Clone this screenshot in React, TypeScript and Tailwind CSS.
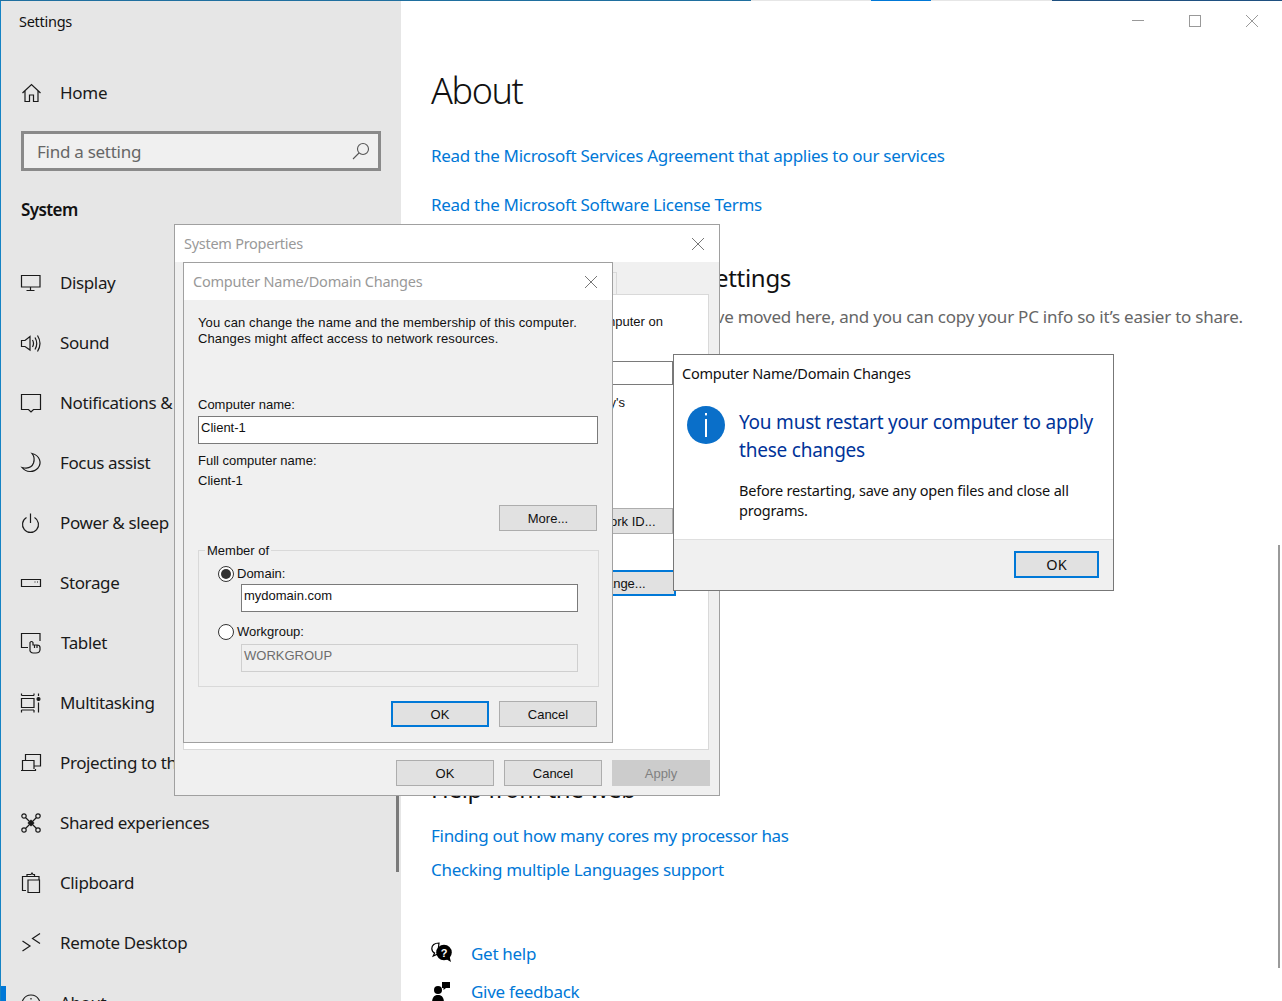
import React from "react";

const S = { fill: "none", stroke: "#1a1a1a", strokeWidth: 1.2 };

function Ico({ children }: { children: React.ReactNode }) {
  return (
    <svg width="22" height="22" viewBox="0 0 22 22" className="shrink-0" {...S}>
      {children}
    </svg>
  );
}

const icons: Record<string, React.ReactNode> = {
  home: <path d="M1.5 11 L10.5 2.5 L19.5 11 M4 9 V19.5 H8.5 V13 H12.5 V19.5 H17 V9" />,
  display: <path d="M1.5 3.5 H20 V15 H1.5 Z M10.5 15 V18.5 M6.5 18.5 H14.5" />,
  sound: (
    <path d="M1.5 8.5 H5 L10 4.5 V18 L5 14.5 H1.5 Z M12.5 8 Q14.5 11.5 12.5 15 M15 5.5 Q18.5 11.5 15 17.5 M17.5 3.5 Q22.5 11.5 17.5 19.5" />
  ),
  notif: <path d="M1.5 2.5 H20.5 V17.5 H13.5 L11 20 L8.5 17.5 H1.5 Z" />,
  focus: <path d="M12 1.5 C20 3.5 22 11 18 16 C13.5 21 6 20.5 2 15.5 C8 17 12 15 13.5 11 C14.5 8 14 4 12 1.5 Z" />,
  power: <path d="M10.5 1.5 V11 M6.5 5.5 A8 8 0 1 0 14.5 5.5" />,
  storage: <path d="M1.5 7.5 H20.5 V14.5 H1.5 Z M14.5 10 H15.5 M17 10 H18" />,
  tablet: (
    <path d="M8 15.5 H1.5 V1.5 H20 V9 M10 19 V10.5 Q11.5 8.5 13 10.5 V13 H17 Q20 13 20 15.5 V18 Q19.5 21 16 21 H13 Q11 21 10 19 Z M14.5 13.5 V16 M17 13.5 V16" />
  ),
  multi: (
    <g>
      <path d="M1.5 1.5 V3.5 M14 1.5 V3.5 M1.5 3.5 H14 M1.5 6.5 H14 V15.5 H1.5 Z M1.5 18 H14 M1.5 18 V20.5 M14 18 V20.5" />
      <path d="M18.5 1.5 V4 M18.5 10.5 V20.5" />
      <circle cx="18.5" cy="7" r="1.5" fill="#1a1a1a" />
    </g>
  ),
  project: <path d="M5.5 8 V2.5 H20.5 V14 H14.5 M1 18.5 H15.5 V17 M2.5 18 V8.5 H14 V17" />,
  shared: (
    <g>
      <circle cx="4" cy="4" r="2.2" />
      <circle cx="18" cy="4" r="2.2" />
      <circle cx="4" cy="18" r="2.2" />
      <circle cx="18" cy="18" r="2.2" />
      <rect x="8.5" y="8.5" width="5" height="5" fill="#1a1a1a" stroke="none" transform="rotate(45 11 11)" />
      <path d="M5.5 5.5 L16.5 16.5 M16.5 5.5 L5.5 16.5" />
    </g>
  ),
  clip: <path d="M6 18.5 H2.5 V4.5 H7 V2.5 H11 L12 1 L13 2.5 H14.5 V4.5 H19 V8 M8 8 H19.5 V20.5 H8 Z M7 4.5 H14.5" />,
  remote: <path d="M2.5 9 L10 14 L2.5 19 M20 1.5 L12.5 6.5 L20 11.5" />,
  about: <path d="M11 3 A9 9 0 1 1 10.99 3 M11 9 V17 M11 6 V7.5" />,
};

function NavRow({ icon, label, wide }: { icon: string; label: string; wide?: boolean }) {
  return (
    <div className="flex h-[60px] items-center pl-[19px] whitespace-nowrap">
      <Ico>{icons[icon]}</Ico>
      <span className={`${wide ? "ml-[19px]" : "ml-[18px]"} text-[17px] tracking-[-0.38px] text-[#1a1a1a]`}>{label}</span>
    </div>
  );
}

function Btn({
  label,
  focus,
  disabled,
  w = "w-[98px]",
  h = "h-[26px]",
}: {
  label: string;
  focus?: boolean;
  disabled?: boolean;
  w?: string;
  h?: string;
}) {
  const look = focus
    ? "border-2 border-[#0078d7] bg-[#e1e1e1] text-[#111]"
    : disabled
      ? "border border-[#cccccc] bg-[#cccccc] text-[#808080]"
      : "border border-[#adadad] bg-[#e1e1e1] text-[#111]";
  return <div className={`${w} ${h} ${look} flex shrink-0 items-center justify-center pt-[1px]`}>{label}</div>;
}

function Field({ value, disabled }: { value: string; disabled?: boolean }) {
  return (
    <div
      className={`flex h-[28px] items-start border pl-[2px] pt-[1px] ${
        disabled ? "border-[#cfcfcf] bg-[#f0f0f0] text-[#6d6d6d]" : "border-[#7a7a7a] bg-white text-[#111]"
      }`}
    >
      {value}
    </div>
  );
}

function Radio({ on, label }: { on?: boolean; label: string }) {
  return (
    <div className="flex h-[18px] items-center">
      <div className="flex h-[16px] w-[16px] items-center justify-center rounded-full border border-[#333] bg-white">
        {on && <div className="h-[10px] w-[10px] rounded-full bg-[#333]" />}
      </div>
      <span className="ml-[3px]">{label}</span>
    </div>
  );
}

function CloseX({ color = "#777" }: { color?: string }) {
  return (
    <svg width="14" height="14" viewBox="0 0 14 14" fill="none" stroke={color} strokeWidth="1">
      <path d="M1 1 L13 13 M13 1 L1 13" />
    </svg>
  );
}

function Sidebar() {
  return (
    <aside className="relative h-full w-[401px] shrink-0 overflow-hidden border-l border-[#1583c4] bg-[#e6e6e6]">
      <div className="flex h-[63px] items-start pl-[18px] pt-[11px] text-[14.5px] tracking-[-0.27px] text-[#111]">Settings</div>
      <div className="flex h-[60px] items-center pl-[20px]">
        <Ico>{icons.home}</Ico>
        <span className="ml-[17px] text-[17px] tracking-[-0.3px] text-[#1a1a1a]">Home</span>
      </div>
      <div className="ml-[20px] mt-[8px] flex h-[40px] w-[360px] items-center justify-between border-[3px] border-[#8a8a8a] bg-[#f0f0f0] pl-[13px] pr-[8px] text-[17px] tracking-[-0.27px] text-[#666]">
        <span className="pt-px">Find a setting</span>
        <svg width="18" height="18" viewBox="0 0 18 18" fill="none" stroke="#555" strokeWidth="1.1">
          <circle cx="11" cy="7" r="5.5" />
          <path d="M7 11 L1 17" />
        </svg>
      </div>
      <div className="pl-[20px] pt-[27px] text-[17px] font-semibold leading-[24px] tracking-[-0.6px] text-[#111]">System</div>
      <div className="mt-[31px]">
        <NavRow icon="display" label="Display" />
        <NavRow icon="sound" label="Sound" />
        <NavRow icon="notif" label="Notifications & actions" />
        <NavRow icon="focus" label="Focus assist" />
        <NavRow icon="power" label="Power & sleep" />
        <NavRow icon="storage" label="Storage" />
        <NavRow icon="tablet" label="Tablet" wide />
        <NavRow icon="multi" label="Multitasking" />
        <NavRow icon="project" label="Projecting to this PC" />
        <NavRow icon="shared" label="Shared experiences" />
        <NavRow icon="clip" label="Clipboard" />
        <NavRow icon="remote" label="Remote Desktop" />
        <NavRow icon="about" label="About" />
      </div>
      <div className="absolute bottom-0 left-[-1px] h-[15px] w-[6px] bg-[#0078d7]" />
      <div className="absolute left-[395px] top-[795px] h-[77px] w-[3px] bg-[#7a7a7a]" />
    </aside>
  );
}

function Main() {
  const link = "text-[17px] tracking-[-0.29px] text-[#0078d7] whitespace-nowrap";
  return (
    <main className="relative h-full flex-1 overflow-hidden bg-white pl-[30px]">
      <div className="absolute right-[138px] top-[20px] h-px w-[12px] bg-[#999]" />
      <div className="absolute right-[81px] top-[15px] h-[12px] w-[12px] border border-[#999]" />
      <div className="absolute right-[23px] top-[14px]">
        <CloseX color="#999" />
      </div>
      <div className="absolute right-[2px] top-[545px] h-[423px] w-[2px] bg-[#9a9a9a]" />
      <h1 className="pt-[67px] text-[36px] font-light leading-[48px] tracking-[-1.4px] text-[#111]">About</h1>
      <div className={`mt-[29px] leading-[24px] ${link}`}>Read the Microsoft Services Agreement that applies to our services</div>
      <div className={`mt-[25px] leading-[24px] ${link}`}>Read the Microsoft Software License Terms</div>
      <h2 className="mt-[45px] text-[24px] leading-[32px] tracking-[-0.3px] text-[#111] whitespace-nowrap">This page has a few new settings</h2>
      <p className="mt-[11px] text-[17px] leading-[24px] tracking-[-0.23px] text-[#666] whitespace-nowrap">
        Some settings from Control Panel have moved here, and you can copy your PC info so it’s easier to share.
      </p>
      <h2 className="mt-[444px] text-[24px] leading-[32px] tracking-[-0.3px] text-[#111]">Help from the web</h2>
      <div className={`mt-[19px] leading-[24px] ${link}`}>Finding out how many cores my processor has</div>
      <div className={`mt-[10px] leading-[24px] ${link}`}>Checking multiple Languages support</div>
      <div className="mt-[60px] flex h-[24px] items-center">
        <svg width="22" height="22" viewBox="0 0 22 22" className="mr-[18px] -translate-y-px">
          <path d="M8 1 C3.5 1 .8 3.4 .8 6.5 C.8 8.6 2 10.2 3.6 11 L2.2 14 L6.6 12 Z" fill="#fff" stroke="#000" strokeWidth="1.2" />
          <circle cx="13" cy="10.5" r="7.8" fill="#000" />
          <path d="M15 17 L20 20 L18.5 14.5 Z" fill="#000" />
          <text x="13" y="14.5" textAnchor="middle" fontSize="11" fontWeight="700" fill="#fff" stroke="none" fontFamily="Liberation Sans, sans-serif">?</text>
        </svg>
        <span className={link}>Get help</span>
      </div>
      <div className="mt-[14px] flex h-[24px] items-center">
        <svg width="22" height="22" viewBox="0 0 22 22" className="mr-[18px]" fill="#000">
          <circle cx="7" cy="9" r="4" />
          <path d="M1 22 C1 16 3.5 14 7 14 C10.5 14 13 16 13 22 Z" />
          <path d="M11 1 H19 V7 H15 L12.5 9 V7 H11 Z" />
        </svg>
        <span className={link}>Give feedback</span>
      </div>
    </main>
  );
}

function SystemProperties() {
  return (
    <div className="absolute left-[174px] top-[224px] flex h-[572px] w-[546px] flex-col border border-[#a0a0a0] bg-[#f0f0f0] font-['Liberation_Sans',sans-serif] text-[13px] text-[#111]">
      <div className="flex h-[37px] shrink-0 items-center justify-between bg-white pl-[9px] pr-[14px] font-['Noto_Sans',sans-serif] text-[14.5px] tracking-[-0.27px] text-[#999]">
        <span>System Properties</span>
        <CloseX />
      </div>
      <div className="flex h-[32px] shrink-0 items-end justify-end pr-[102px]">
        <div className="h-[22px] w-[60px] border border-b-0 border-[#d9d9d9] bg-[#f0f0f0]" />
      </div>
      <div className="ml-[8px] mr-[10px] flex h-[456px] shrink-0 flex-col border border-[#d9d9d9] bg-white pr-[35px]">
        <div className="mt-[19px] h-[47px] pr-[10px] text-right leading-[16px] whitespace-nowrap">To identify your computer on</div>
        <div className="ml-[20px] h-[24px] border border-[#7a7a7a]" />
        <div className="mt-[10px] h-[16px] pr-[48px] text-right leading-[16px]">Mary's</div>
        <div className="mt-[97px] flex justify-end">
          <Btn label="Network ID..." w="w-[110px]" />
        </div>
        <div className="mt-[36px] flex justify-end">
          <div className="-mr-[3px]">
            <Btn label="Change..." focus w="w-[117px]" />
          </div>
        </div>
      </div>
      <div className="mr-[9px] mt-[10px] flex justify-end gap-[10px]">
        <Btn label="OK" />
        <Btn label="Cancel" />
        <Btn label="Apply" disabled />
      </div>
    </div>
  );
}

function NameChanges() {
  return (
    <div className="absolute left-[183px] top-[262px] flex h-[481px] w-[430px] flex-col border border-[#a0a0a0] bg-[#f0f0f0] font-['Liberation_Sans',sans-serif] text-[13px] text-[#111]">
      <div className="flex h-[37px] shrink-0 items-center justify-between bg-white pl-[9px] pr-[14px] font-['Noto_Sans',sans-serif] text-[14.5px] tracking-[-0.22px] text-[#999]">
        <span>Computer Name/Domain Changes</span>
        <CloseX />
      </div>
      <div className="flex flex-1 flex-col px-[14px]">
        <p className="mt-[15px] h-[32px] leading-[16px] tracking-[0.12px] whitespace-nowrap">
          You can change the name and the membership of this computer.
          <br />
          Changes might affect access to network resources.
        </p>
        <div className="mt-[50px] h-[16px] leading-[16px]">Computer name:</div>
        <div className="mt-[3px] w-[400px]">
          <Field value="Client-1" />
        </div>
        <div className="mt-[9px] h-[16px] leading-[16px]">Full computer name:</div>
        <div className="mt-[4px] h-[16px] leading-[16px]">Client-1</div>
        <div className="mt-[16px] flex w-[399px] justify-end">
          <Btn label="More..." />
        </div>
        <div className="relative mt-[19px] h-[137px] w-[401px] border border-[#d9d9d9] pl-[19px] pt-[14px]">
          <span className="absolute -top-[8px] left-[6px] bg-[#f0f0f0] px-[2px] leading-[16px]">Member of</span>
          <Radio on label="Domain:" />
          <div className="ml-[23px] mt-[1px] w-[337px]">
            <Field value="mydomain.com" />
          </div>
          <div className="mt-[11px]">
            <Radio label="Workgroup:" />
          </div>
          <div className="ml-[23px] mt-[3px] w-[337px]">
            <Field value="WORKGROUP" disabled />
          </div>
        </div>
        <div className="mt-[14px] flex w-[399px] justify-end gap-[10px]">
          <Btn label="OK" focus />
          <Btn label="Cancel" />
        </div>
      </div>
    </div>
  );
}

function RestartDialog() {
  return (
    <div className="absolute left-[673px] top-[354px] flex h-[237px] w-[441px] flex-col border border-[#777] bg-white font-['Noto_Sans',sans-serif]">
      <div className="pl-[8px] pt-[8px] text-[14.5px] leading-[20px] tracking-[-0.25px] text-[#111]">Computer Name/Domain Changes</div>
      <div className="flex flex-1 pl-[13px] pt-[23px]">
        <div className="relative flex h-[38px] w-[38px] shrink-0 items-center justify-center rounded-full bg-[#0a6fc9]">
          <svg width="4" height="24" viewBox="0 0 4 24" fill="#fff">
            <rect x="1" y="0" width="2" height="2.4" />
            <rect x="1" y="6" width="2" height="18" />
          </svg>
        </div>
        <div className="ml-[14px]">
          <div className="mt-[2px] w-[365px] text-[19px] leading-[28px] tracking-[-0.22px] text-[#003399]">
            You must restart your computer to apply these changes
          </div>
          <div className="mt-[16px] w-[345px] text-[14.5px] leading-[20px] tracking-[-0.2px] text-[#111]">
            Before restarting, save any open files and close all programs.
          </div>
        </div>
      </div>
      <div className="flex h-[51px] shrink-0 items-start justify-end border-t border-[#dfdfdf] bg-[#f0f0f0] pr-[14px] pt-[11px] text-[14.5px]">
        <Btn label="OK" focus w="w-[85px]" h="h-[27px]" />
      </div>
    </div>
  );
}

export default function App() {
  return (
    <div className="relative flex h-[1001px] w-[1282px] overflow-hidden bg-white font-['Noto_Sans',sans-serif]">
      <Sidebar />
      <Main />
      <div className="absolute left-0 top-0 flex h-px w-full">
        <div className="h-px w-[751px] bg-[#1f6f9f]" />
        <div className="h-px w-[120px] bg-[#e6e6e6]" />
        <div className="h-px w-[60px] bg-[#0078d7]" />
        <div className="h-px w-[121px] bg-[#e6e6e6]" />
        <div className="h-px flex-1 bg-[#1f5080]" />
      </div>
      <SystemProperties />
      <NameChanges />
      <RestartDialog />
    </div>
  );
}
